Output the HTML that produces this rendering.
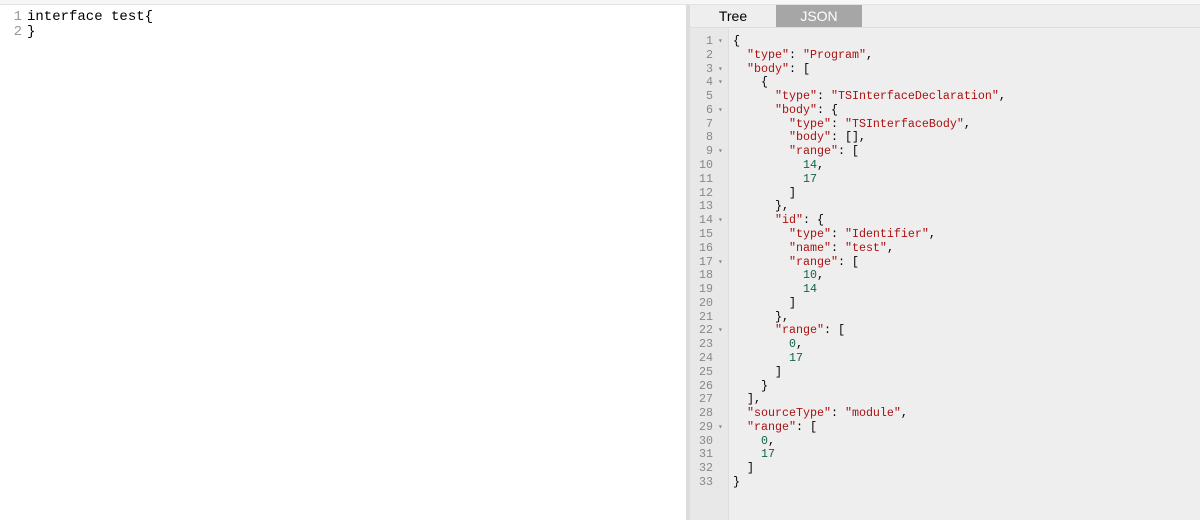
<!DOCTYPE html><html><head><style>
body{margin:0;width:1200px;height:520px;overflow:hidden;background:#fff;font-family:"Liberation Mono",monospace;position:relative}
.top{position:absolute;left:0;top:0;width:1200px;height:4px;background:#f7f7f7;border-bottom:1px solid #e2e2e2}
.left{position:absolute;left:0;top:10px;font-size:14px;line-height:15px;color:#000}
.left .n{color:#999;display:inline-block;width:22px;text-align:right;margin-right:5px}
.div{position:absolute;left:686px;top:5px;width:4px;height:515px;background:#dcdcdc}
.right{position:absolute;left:690px;top:5px;width:510px;height:515px;background:#eee}
.tab{position:absolute;top:0;height:22px;width:86px;text-align:center;font:14px/22px "Liberation Sans",sans-serif}
.t1{left:0;color:#000}.t2{left:86px;background:#a6a6a6;color:#fff}
.sep{position:absolute;left:0;top:22px;width:510px;height:1px;background:#ddd}
.gut{position:absolute;left:0;top:23px;width:38px;height:492px;background:#e8e8e8;border-right:1px solid #ddd}
.code{position:absolute;left:0;top:30px;font-size:11.67px;line-height:13.78px;white-space:pre;color:#000}
.code .n{display:inline-block;width:23px;text-align:right;color:#888;margin-right:20px;position:relative}
.code .a::after{content:"▾";position:absolute;left:28px;font-size:8px;color:#888}
.s{color:#a11}.m{color:#164}
</style></head><body>
<div class="top"></div>
<div class="left"><div><span class="n">1</span>interface test{</div><div><span class="n">2</span>}</div></div>
<div class="div"></div>
<div class="right">
<div class="tab t1">Tree</div><div class="tab t2">JSON</div><div class="sep"></div>
<div class="gut"></div>
<div class="code"><span class="n a">1</span>{
<span class="n">2</span>  <span class="s">"type"</span>: <span class="s">"Program"</span>,
<span class="n a">3</span>  <span class="s">"body"</span>: [
<span class="n a">4</span>    {
<span class="n">5</span>      <span class="s">"type"</span>: <span class="s">"TSInterfaceDeclaration"</span>,
<span class="n a">6</span>      <span class="s">"body"</span>: {
<span class="n">7</span>        <span class="s">"type"</span>: <span class="s">"TSInterfaceBody"</span>,
<span class="n">8</span>        <span class="s">"body"</span>: [],
<span class="n a">9</span>        <span class="s">"range"</span>: [
<span class="n">10</span>          <span class="m">14</span>,
<span class="n">11</span>          <span class="m">17</span>
<span class="n">12</span>        ]
<span class="n">13</span>      },
<span class="n a">14</span>      <span class="s">"id"</span>: {
<span class="n">15</span>        <span class="s">"type"</span>: <span class="s">"Identifier"</span>,
<span class="n">16</span>        <span class="s">"name"</span>: <span class="s">"test"</span>,
<span class="n a">17</span>        <span class="s">"range"</span>: [
<span class="n">18</span>          <span class="m">10</span>,
<span class="n">19</span>          <span class="m">14</span>
<span class="n">20</span>        ]
<span class="n">21</span>      },
<span class="n a">22</span>      <span class="s">"range"</span>: [
<span class="n">23</span>        <span class="m">0</span>,
<span class="n">24</span>        <span class="m">17</span>
<span class="n">25</span>      ]
<span class="n">26</span>    }
<span class="n">27</span>  ],
<span class="n">28</span>  <span class="s">"sourceType"</span>: <span class="s">"module"</span>,
<span class="n a">29</span>  <span class="s">"range"</span>: [
<span class="n">30</span>    <span class="m">0</span>,
<span class="n">31</span>    <span class="m">17</span>
<span class="n">32</span>  ]
<span class="n">33</span>}</div>
</div>
</body></html>
